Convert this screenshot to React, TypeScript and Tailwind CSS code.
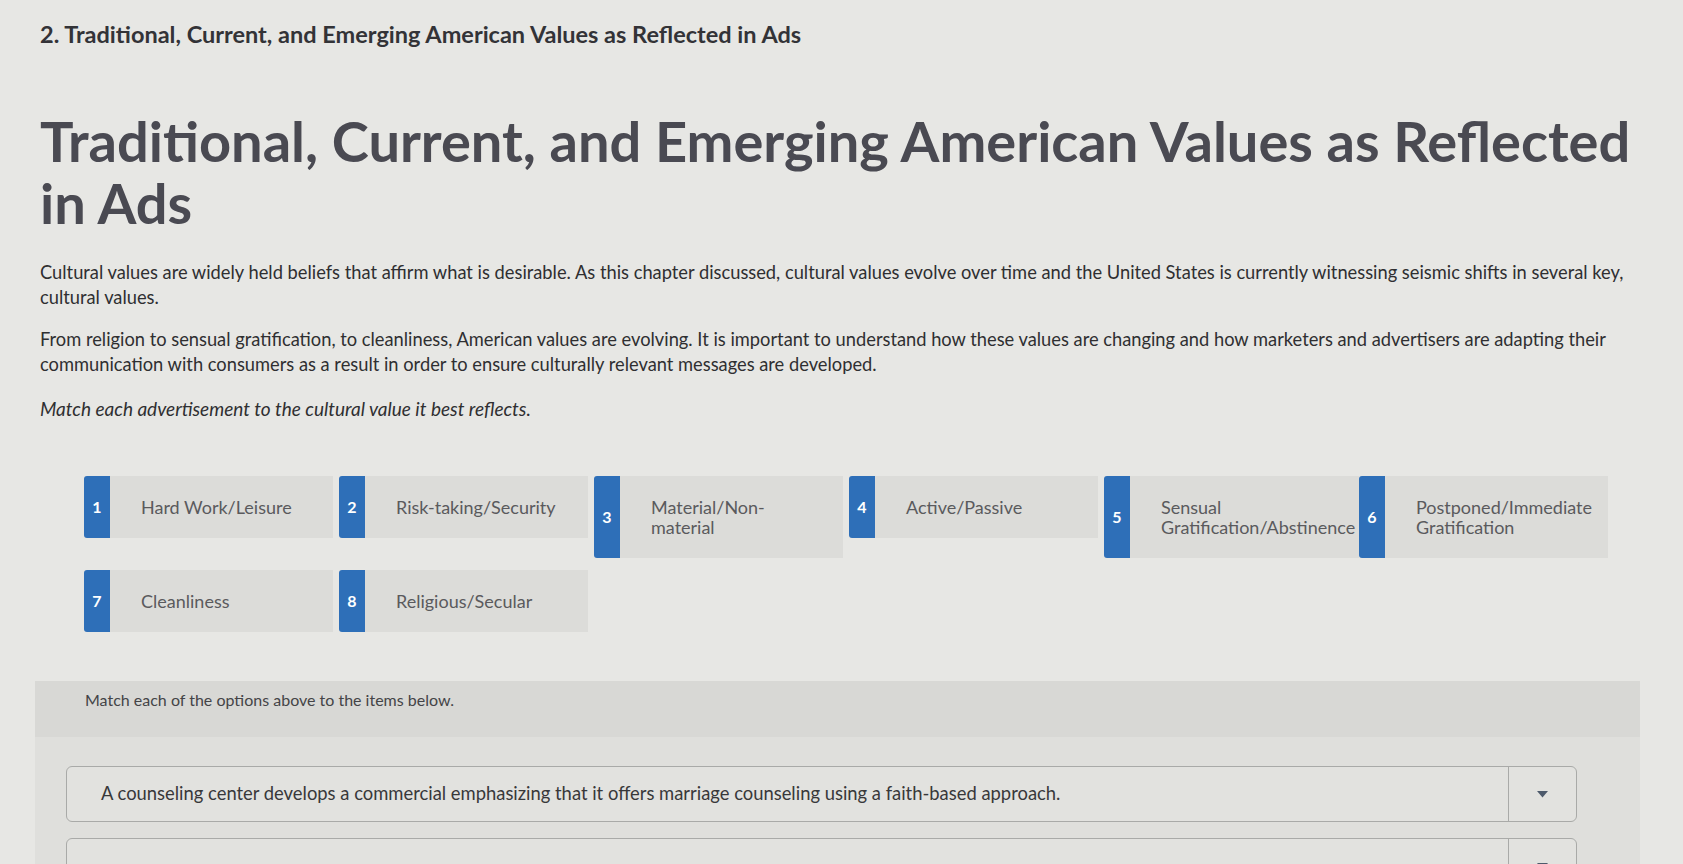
import React from "react";

const tiles: { n: string; lines: string[] }[] = [
  { n: "1", lines: ["Hard Work/Leisure"] },
  { n: "2", lines: ["Risk-taking/Security"] },
  { n: "3", lines: ["Material/Non-", "material"] },
  { n: "4", lines: ["Active/Passive"] },
  { n: "5", lines: ["Sensual", "Gratification/Abstinence"] },
  { n: "6", lines: ["Postponed/Immediate", "Gratification"] },
  { n: "7", lines: ["Cleanliness"] },
  { n: "8", lines: ["Religious/Secular"] },
];

function Tile({ n, lines }: { n: string; lines: string[] }) {
  return (
    <div className="flex w-[249px] items-stretch">
      <div className="flex w-[26px] shrink-0 items-center justify-center rounded-l-[3px] bg-[#2e6fb8] text-[16px] font-bold text-white">
        {n}
      </div>
      <div className="flex flex-1 items-center bg-[#dcdcd9] py-[21px] pl-[31px] pr-1 text-[18px] leading-[20px] text-[#5a5a5d]">
        <div className="whitespace-nowrap">
          {lines.map((l, i) => (
            <div key={i}>{l}</div>
          ))}
        </div>
      </div>
    </div>
  );
}

function SelectRow({ text }: { text: string }) {
  return (
    <div className="flex h-[56px] w-full rounded-[6px] border border-[#a9aaa8] bg-[#e2e2df]">
      <div className="flex flex-1 items-center pl-[34px] text-[18.4px] text-[#38383a]">{text}</div>
      <div className="flex w-[68px] items-center justify-center border-l border-[#a9aaa8]">
        <svg width="11" height="7" viewBox="0 0 11 7">
          <path d="M0 0 L11 0 L5.5 6.5 Z" fill="#4d5a6b" />
        </svg>
      </div>
    </div>
  );
}

export default function App() {
  return (
    <div
      className="h-[864px] overflow-hidden bg-[#e7e7e4] pl-[40px] pt-[19px]"
      style={{ fontFamily: "Lato, 'Open Sans', sans-serif" }}
    >
      <h2 className="whitespace-nowrap text-[23.5px] font-bold leading-[30px] text-[#333337]">
        2. Traditional, Current, and Emerging American Values as Reflected in Ads
      </h2>
      <h1 className="mt-[61px] whitespace-nowrap text-[56px] font-bold leading-[62px] text-[#4a4a52]">
        Traditional, Current, and Emerging American Values as Reflected
        <br />
        in Ads
      </h1>
      <div className="mt-[26px] text-[18.3px] leading-[25px] text-[#2f2f31]">
        <p className="whitespace-nowrap">
          Cultural values are widely held beliefs that affirm what is desirable. As this chapter discussed, cultural values evolve over time and the United States is currently witnessing seismic shifts in several key,
          <br />
          cultural values.
        </p>
        <p className="mt-[17px] whitespace-nowrap">
          From religion to sensual gratification, to cleanliness, American values are evolving. It is important to understand how these values are changing and how marketers and advertisers are adapting their
          <br />
          communication with consumers as a result in order to ensure culturally relevant messages are developed.
        </p>
        <p className="mt-[19px] whitespace-nowrap text-[19px] italic">
          Match each advertisement to the cultural value it best reflects.
        </p>
      </div>

      <div className="ml-[44px] mt-[55px] flex w-[1530px] flex-wrap items-start gap-x-[6px] gap-y-[12px]">
        {tiles.map((t) => (
          <Tile key={t.n} n={t.n} lines={t.lines} />
        ))}
      </div>

      <div className="-ml-[5px] mt-[49px] w-[1605px] bg-[#dfdfdc] pb-[40px]">
        <div className="h-[56px] bg-[#d8d8d5] pl-[50px] pt-[9px] text-[16px] leading-[20px] text-[#444447]">
          Match each of the options above to the items below.
        </div>
        <div className="flex flex-col gap-[16px] pl-[31px] pr-[63px] pt-[29px]">
          <SelectRow text="A counseling center develops a commercial emphasizing that it offers marriage counseling using a faith-based approach." />
          <SelectRow text="" />
        </div>
      </div>
    </div>
  );
}
